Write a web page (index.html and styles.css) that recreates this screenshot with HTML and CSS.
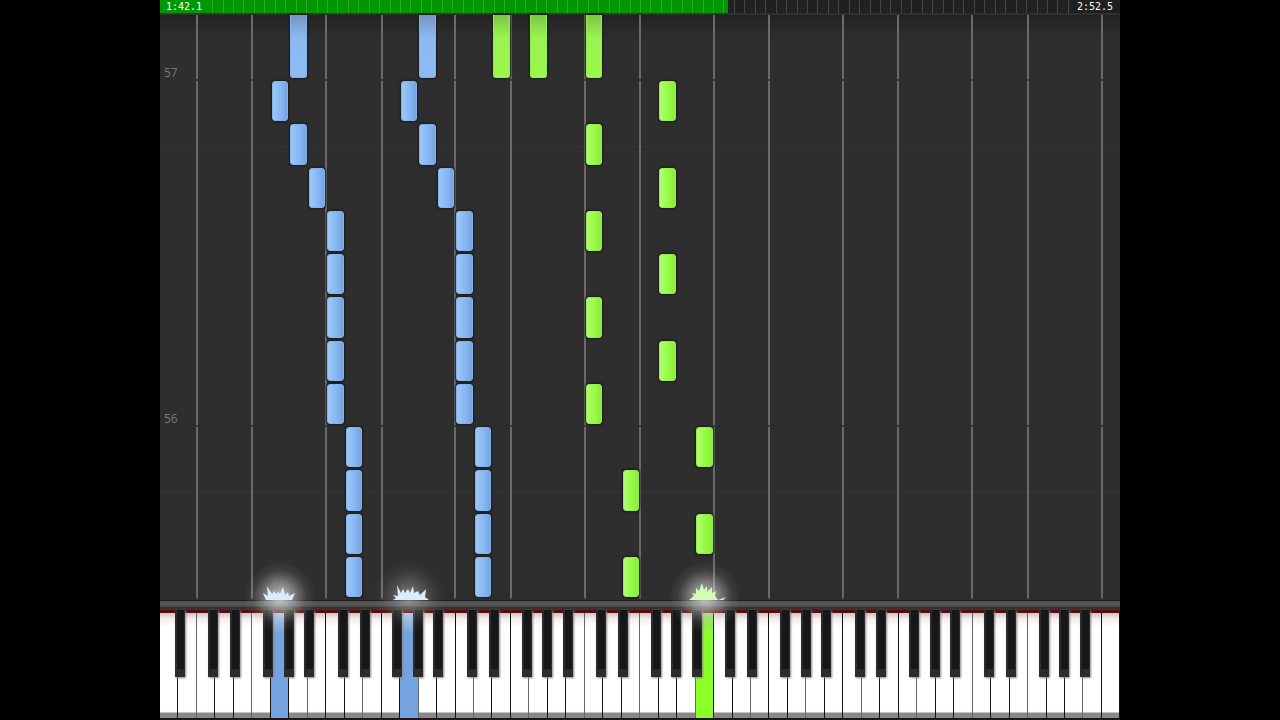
FILE: index.html
```
<!DOCTYPE html>
<html lang="en">
<head>
	<title>Piano roll</title>
	<meta charset="UTF-8">
	<link rel="stylesheet" href="styles.css">
</head>
<body>
	<main class="player">
		<div class="timeline">
			<input class="seek" type="range" id="seek" aria-label="Position" min="0" max="960" value="568">
			<label class="time" for="seek">1:42.1</label>
			<span class="time total">2:52.5</span>
		</div>
		<div class="roll" id="roll">
			<div class="beat half-top"></div>
			<div class="beat half-bottom"></div>
			<span class="measure m57">57</span>
			<span class="measure m56">56</span>
		</div>
		<div class="rail"></div>
		<div class="keyboard" id="keyboard"></div>
	</main>
	<script src="script.js"></script>
</body>
</html>
```
FILE: styles.css
```
* {
	box-sizing: border-box;
}
body {
	margin: 0;
	background: #000;
	font-family: "Open Sans", "Noto Sans", sans-serif;
}
.player {
	display: flex;
	flex-direction: column;
	width: 75%;
	height: 100vh;
	margin: 0 auto;
	overflow: hidden;
	background: #2e2e2e;
}

/* time bar */
.timeline {
	display: grid;
	grid-template-columns: 1fr auto;
	height: 15px;
	border-bottom: 2px solid #303030;
	background: #202020;
}
.seek {
	grid-area: 1 / 1 / 2 / 3;
	appearance: none;
	width: 100%;
	height: 13px;
	margin: 0;
	background:
		repeating-linear-gradient(to right, rgba(255,255,255,0.16) 0 1px, transparent 1px calc(100% / 92)),
		linear-gradient(to right, #009600 59.2%, #202020 59.2%);
}
.seek::-webkit-slider-thumb {
	appearance: none;
	width: 1px;
	height: 13px;
}
.time {
	grid-area: 1 / 1;
	z-index: 1;
	justify-self: start;
	padding: 0 1px 0 6px;
	font: 10px/13px "DejaVu Sans Mono", monospace;
	color: #fff;
	background: #009600;
}
.time.total {
	grid-area: 1 / 2;
	padding: 0 7px 0 6px;
	background: #202020;
}

/* falling notes: 52 white keys across, eighth notes down */
.roll {
	flex: 1;
	display: grid;
	grid-template-columns: repeat(52, minmax(0, 1fr));
	grid-template-rows: 153fr repeat(12, minmax(0, 100fr));
	min-height: 0;
	background: linear-gradient(#222 0, #2a2a2a 14px, #2e2e2e 24px);
}
.line {
	width: 2px;
	margin-left: -1px;
	background: #6a6a6a;
	border-bottom: 2px solid #3c3c3c;
}
.beat {
	grid-column: 1 / 53;
	align-self: center;
	height: 1px;
	background: #353535;
}
.half-top {
	grid-row: 3;
}
.half-bottom {
	grid-row: 11;
}
.measure {
	align-self: end;
	padding-left: 4px;
	font-size: 12px;
	line-height: 16px;
	color: #787878;
}
.m57 {
	grid-area: 1 / 1;
}
.m56 {
	grid-area: 9 / 1;
}
.note {
	z-index: 1;
	margin: 0 1px 3px;
	border-radius: 3px;
	box-shadow: 0 0 2px 1px #1c1c1c;
}
.note.left {
	border: 1px solid #84b2ea;
	background: linear-gradient(to right, #9cc8f8, #84b6f2 60%, #74a4e0);
}
.note.right {
	border: 1px solid #94ee50;
	background: linear-gradient(to right, #b0fc78, #98fc44 50%, #8cec3c);
}
.note.cut {
	border-top: 0;
	border-radius: 0 0 3px 3px;
}
.note.cut.left {
	background: linear-gradient(#7494bc, #8cb8f0 22px, #8cbcf4);
}
.note.cut.right {
	background: linear-gradient(#7cc444, #98f450 22px, #98f84c);
}

.rail {
	height: 10px;
	border-top: 1px solid #1c1c1c;
	background: linear-gradient(#545454 0 5px, #343434 6px);
}

/* keyboard */
.keyboard {
	position: relative;
	display: flex;
	height: 110px;
	border-top: 3px solid #5a0c0c;
	border-bottom: 2px solid #201418;
}
.key {
	padding: 0;
	border: 0;
}
.white {
	flex: 1;
	min-width: 0;
	border-right: 1px solid #111;
	background: linear-gradient(#d0c4c4 0, #f4eeee 6px, #fff 14px, #fff calc(100% - 6px), #888 calc(100% - 5px));
}
.white:nth-of-type(3n + 2) {
	border-right-color: #666;
}
.white.left {
	background: linear-gradient(#a8c4ec, #74a4e0 20px);
}
.white.right {
	background: linear-gradient(#94d860, #8cff28 20px);
}
.black {
	position: absolute;
	top: -3px;
	width: 10px;
	height: 67px;
	border: solid #2c2c2c;
	border-width: 0 1px 8px 2px;
	background: #171717;
	box-shadow: 1px 1px 2px #888;
}

/* sparks over the keys being played */
.spark {
	position: absolute;
	top: -44px;
	width: 80px;
	height: 80px;
	margin-left: -40px;
	pointer-events: none;
}
.spark svg {
	overflow: visible;
}
```
FILE: script.js
```
const WHITE = 52;
let roll = document.getElementById('roll');
let keyboard = document.getElementById('keyboard');

function add(parent, tag, cls){
	let el = document.createElement(tag);
	el.className = cls;
	parent.appendChild(el);
	return el;
}

// lines before every C and F, broken at each measure
for(let i = 0; i < WHITE; i++){
	if(i % 7 != 2 && i % 7 != 5) continue;
	for(let rows of ['1 / 2', '2 / 10', '10 / 14']){
		let line = add(roll, 'div', 'line');
		line.style.gridColumn = i + 1;
		line.style.gridRow = rows;
	}
}

// [white key, row], row 1 is the one cut by the time bar
let notes = {
	left: [[7,1],[6,2],[7,3],[8,4],[9,5],[9,6],[9,7],[9,8],[9,9],[10,10],[10,11],[10,12],[10,13],
		[14,1],[13,2],[14,3],[15,4],[16,5],[16,6],[16,7],[16,8],[16,9],[17,10],[17,11],[17,12],[17,13]],
	right: [[18,1],[20,1],[23,1],[27,2],[23,3],[27,4],[23,5],[27,6],[23,7],[27,8],[23,9],
		[29,10],[25,11],[29,12],[25,13]]
};
for(let hand in notes){
	for(let [key, row] of notes[hand]){
		let note = add(roll, 'div', 'note ' + hand + (row == 1 ? ' cut' : ''));
		note.style.gridColumn = key + 1;
		note.style.gridRow = row;
	}
}

let pressed = {6: 'left', 13: 'left', 29: 'right'};
for(let i = 0; i < WHITE; i++){
	let key = add(keyboard, 'button', 'key white ' + (pressed[i] || ''));
	key.ariaLabel = 'ABCDEFG'[i % 7] + ' ' + Math.floor((i + 5) / 7);
}

// left edge of the sharp after each white key, in white key widths
let sharps = {0: 0.81, 2: 0.62, 3: 0.81, 5: 0.59, 6: 0.7};
for(let i = 0; i < WHITE - 1; i++){
	let shift = sharps[i % 7];
	if(!shift) continue;
	let key = add(keyboard, 'button', 'key black');
	key.ariaLabel = 'ABCDEFG'[i % 7] + ' sharp ' + Math.floor((i + 5) / 7);
	key.style.left = (i + shift) / WHITE * 100 + '%';
}

let flames = {
	6: 'M26 31 L23 24 L28 27 L27 17 L32 25 L34 22 L36 25 L38 23 L40 25 L43 18 L45 26 L48 23 L49 27 L55 24 L52 31Z',
	13: 'M24 31 L27 29 L24 26 L29 27 L28 16 L32 24 L34 20 L36 24 L39 20 L41 24 L44 17 L45 24 L49 22 L51 26 L57 20 L56 28 L60 31Z',
	29: 'M24 31 L29 27 L27 24 L31 25 L31 19 L34 22 L37 14 L39 21 L42 17 L42 23 L47 18 L47 24 L51 22 L50 27 L53 31 L61 28 L58 31Z'
};
for(let i in flames){
	let spark = add(keyboard, 'div', 'spark');
	let core = i == 29 ? '#d4fcb4' : '#dcecff';
	spark.style.left = (+i + 0.5) / WHITE * 100 + '%';
	spark.innerHTML = `<svg viewBox="0 0 80 80" width="80" height="80">
		<defs><radialGradient id="glow${i}">
			<stop offset="0" stop-color="#eee" stop-opacity="${i == 13 ? 0.45 : 0.8}"/>
			<stop offset="0.4" stop-color="#ddd" stop-opacity="${i == 13 ? 0.22 : 0.45}"/>
			<stop offset="0.75" stop-color="#ccc" stop-opacity="${i == 13 ? 0.06 : 0.1}"/>
			<stop offset="1" stop-color="#ccc" stop-opacity="0"/>
		</radialGradient></defs>
		<circle cx="40" cy="28" r="36" fill="url(#glow${i})"/>
		<path d="${flames[i]}" fill="${core}"/>
	</svg>`;
}
```
